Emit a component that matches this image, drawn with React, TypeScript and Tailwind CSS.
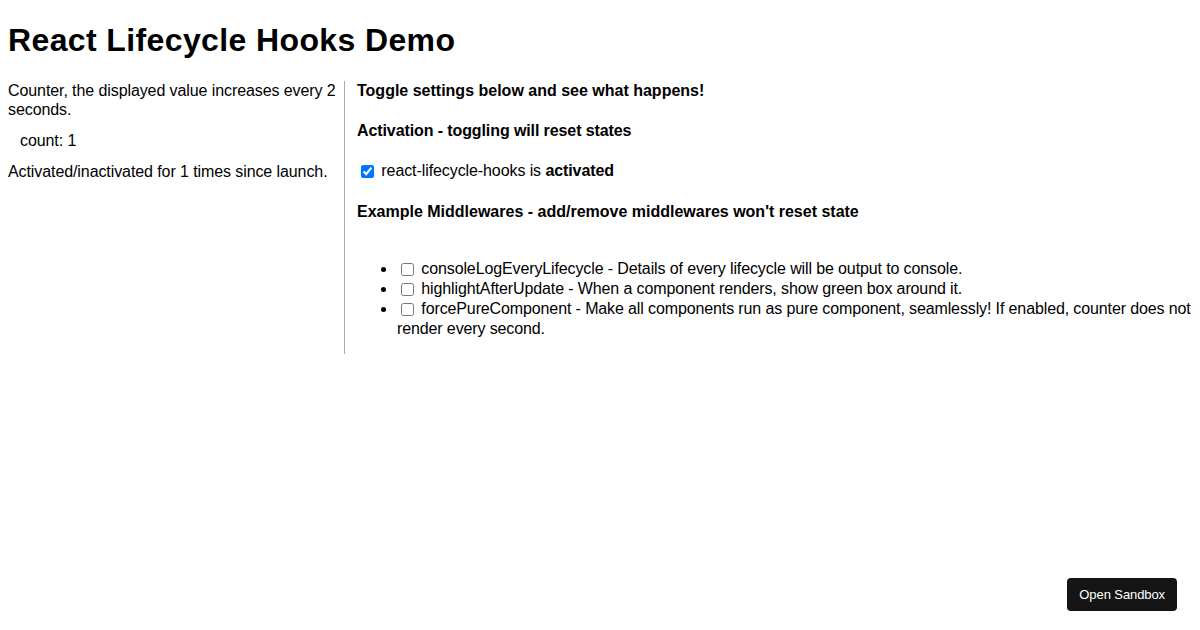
import { useState } from "react"

const middlewares = [
  { name: "consoleLogEveryLifecycle", text: "Details of every lifecycle will be output to console." },
  { name: "highlightAfterUpdate", text: "When a component renders, show green box around it." },
  {
    name: "forcePureComponent",
    text: "Make all components run as pure component, seamlessly! If enabled, counter does not render every second.",
  },
]

export default function App() {
  const [activated, setActivated] = useState(true)
  const [enabled, setEnabled] = useState<Record<string, boolean>>({})

  return (
    <div className="min-h-[630px] pl-2 pr-1 font-['Liberation_Sans',Arial,sans-serif] text-base leading-[19px] tracking-[-0.09px] text-black">
      <h1 className="pt-[22px] pb-[22px] text-[32px] font-bold leading-[37px] tracking-[0.38px]">
        React Lifecycle Hooks Demo
      </h1>

      <div className="flex">
        <div className="w-[337px] shrink-0 border-r border-[#aaa] pr-1">
          <p>Counter, the displayed value increases every 2 seconds.</p>
          <div className="p-3">count: 1</div>
          <p>Activated/inactivated for 1 times since launch.</p>
        </div>

        <div className="flex-1 pl-3">
          <h4 className="font-bold tracking-normal">Toggle settings below and see what happens!</h4>
          <h4 className="mt-[21px] font-bold tracking-[-0.1px]">Activation - toggling will reset states</h4>
          <div className="mt-[21px] leading-[20px]">
            <label>
              <input
                type="checkbox"
                checked={activated}
                onChange={() => setActivated(!activated)}
                className="mt-[3px] mr-[3px] mb-[3px] ml-1 align-[-2px]"
              />{" "}
              react-lifecycle-hooks is <b>{activated ? "activated" : "inactivated"}</b>
            </label>
          </div>
          <h4 className="mt-[21px] font-bold tracking-normal">
            Example Middlewares - add/remove middlewares won't reset state
          </h4>
          <ul className="mt-[38px] mb-[15px] list-disc pl-10 leading-[20px] tracking-[-0.12px]">
            {middlewares.map((m) => (
              <li key={m.name}>
                <label>
                  <input
                    type="checkbox"
                    checked={!!enabled[m.name]}
                    onChange={() => setEnabled({ ...enabled, [m.name]: !enabled[m.name] })}
                    className="mt-[3px] mr-[3px] mb-[3px] ml-1 align-[-2px]"
                  />{" "}
                  {m.name} - {m.text}
                </label>
              </li>
            ))}
          </ul>
        </div>
      </div>

      <button className="fixed right-[23px] bottom-[19px] h-[33px] rounded bg-[#151515] px-3 text-[13px] text-white">
        Open Sandbox
      </button>
    </div>
  )
}
